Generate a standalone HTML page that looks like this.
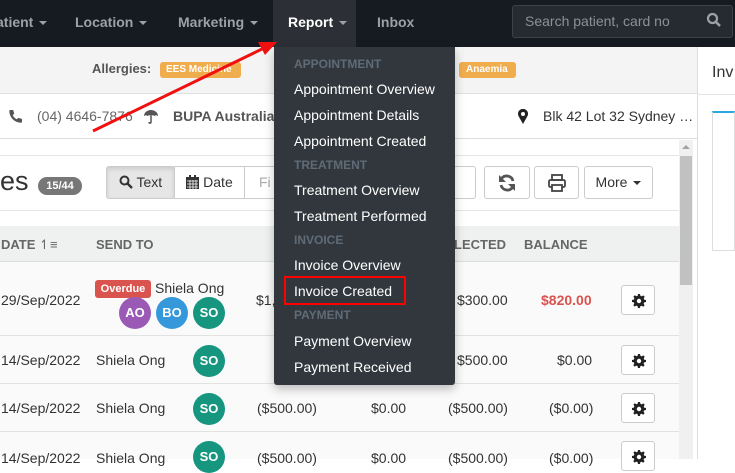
<!DOCTYPE html>
<html><head><style>
*{box-sizing:border-box;margin:0;padding:0}
body{width:735px;height:459px;overflow:hidden;background:#fff;font-family:"Liberation Sans",sans-serif;position:relative;font-size:14px;color:#333}
.a{position:absolute}
.nav{left:0;top:0;width:735px;height:47px;background:#161b21}
.ni{top:14px;color:#9da1a6;font-weight:bold;font-size:14px}
.car{display:inline-block;border-left:4px solid transparent;border-right:4px solid transparent;border-top:4px solid currentColor;vertical-align:middle;margin-left:6px}
.dd{left:274px;top:47px;width:181px;height:338px;background:#32373d;border-radius:0 0 3px 3px;box-shadow:0 4px 10px rgba(0,0,0,.25)}
.dh{left:20px;color:#5f6b76;font-size:12px;font-weight:bold}
.di{left:20px;color:#fff;font-size:14px}
.btn{top:166px;height:33px;border:1px solid #ccc;background:#fff;border-radius:3px;font-size:14px;line-height:31px;text-align:center;color:#333}
.btn svg{vertical-align:-2px}
.th{top:237px;font-weight:bold;color:#666;font-size:13px}
.av{width:32px;height:32px;border-radius:50%;color:#fff;font-weight:bold;font-size:13px;text-align:center;line-height:32px}
.gear{width:34px;height:30px;border:1px solid #ccc;border-radius:3px;background:#fff;left:621px}
.gear svg{position:absolute;left:10px;top:8px}
</style></head><body>
<svg width="0" height="0" style="position:absolute"><defs>
<g id="cog"><path d="M6 0h2l.4 1.8 1.3.6 1.6-1 1.4 1.4-1 1.6.6 1.3L14 6v2l-1.8.4-.6 1.3 1 1.6-1.4 1.4-1.6-1-1.3.6L8 14H6l-.4-1.8-1.3-.6-1.6 1-1.4-1.4 1-1.6-.6-1.3L0 8V6l1.8-.4.6-1.3-1-1.6 1.4-1.4 1.6 1 1.3-.6z" fill="#222"/><circle cx="7" cy="7" r="2.2" fill="#fff"/></g>
</defs></svg>
<div class="a nav"></div>
<div class="a ni" style="left:-4px">atient<span class="car"></span></div>
<div class="a ni" style="left:75px">Location<span class="car"></span></div>
<div class="a ni" style="left:178px">Marketing<span class="car"></span></div>
<div class="a" style="left:273px;top:0;width:83px;height:47px;background:#2c3036"></div>
<div class="a ni" style="left:288px;color:#fff">Report<span class="car" style="color:#9da1a6"></span></div>
<div class="a ni" style="left:377px">Inbox</div>
<div class="a" style="left:512px;top:5px;width:221px;height:33px;background:#262b31;border:1px solid #3d4248;border-radius:3px"></div>
<div class="a" style="left:525px;top:13px;color:#8d9197;font-size:14px">Search patient, card no</div>
<svg class="a" style="left:706px;top:12px" width="16" height="16"><circle cx="6.5" cy="6.5" r="4.5" stroke="#9da1a6" stroke-width="2.2" fill="none"/><line x1="10" y1="10" x2="14" y2="14" stroke="#9da1a6" stroke-width="2.6"/></svg>

<div class="a" style="left:0;top:47px;width:697px;height:47px;background:#f4f4f4;border-bottom:1px solid #e0e0e0"></div>
<div class="a" style="left:92px;top:61px;font-weight:bold;color:#555;font-size:13px">Allergies:</div>
<div class="a" style="left:160px;top:62px;width:81px;height:16px;background:#f0ad4e;border-radius:3px;color:#fff;font-size:10px;font-weight:bold;line-height:16px;padding-left:6px">EES Medicine</div>
<div class="a" style="left:459px;top:62px;width:57px;height:16px;background:#f0ad4e;border-radius:3px;color:#fff;font-size:10px;font-weight:bold;line-height:16px;padding-left:7px">Anaemia</div>
<div class="a" style="left:0;top:95px;width:697px;height:44px;background:#fff;border-bottom:1px solid #ddd"></div>
<svg class="a" style="left:9px;top:109px" width="14" height="14"><path d="M13 10.5v2.2c0 .5-.5 1-1 1C5.5 13.5.5 8.5.3 2 .3 1.4.8 1 1.3 1h2.3c.4 0 .7.3.8.6l.7 2.6c.1.3 0 .6-.3.9L3.7 6.3c.9 1.8 2.3 3.2 4 4l1.2-1.1c.2-.2.6-.3.9-.2l2.6.7c.4.1.6.4.6.8z" fill="#555"/></svg>
<div class="a" style="left:37px;top:108px;color:#666">(04) 4646-7876</div>
<svg class="a" style="left:143px;top:109px" width="16" height="16"><path d="M1 7 A7 6 0 0 1 15 7 Q13 5.5 11.5 7 Q10 5.5 8 7 Q6 5.5 4.5 7 Q3 5.5 1 7z" fill="#555"/><path d="M8 7v6c0 1.5-2 1.5-2 0" stroke="#555" stroke-width="1.5" fill="none"/></svg>
<div class="a" style="left:173px;top:108px;color:#555;font-weight:bold">BUPA Australia</div>
<svg class="a" style="left:517px;top:109px" width="12" height="16"><path d="M6 15 L1.5 7 A5 5 0 1 1 10.5 7 Z" fill="#222"/><circle cx="6" cy="5" r="2" fill="#fff"/></svg>
<div class="a" style="left:543px;top:108px;color:#333">Blk 42 Lot 32 Sydney …</div>
<div class="a" style="left:697px;top:47px;width:38px;height:412px;border-left:1px solid #ddd;background:#fff"></div>
<div class="a" style="left:697px;top:94px;width:38px;border-top:1px solid #e5e5e5"></div>
<div class="a" style="left:712px;top:64px;font-size:16px;color:#333">Inv</div>
<div class="a" style="left:712px;top:111px;width:23px;height:140px;border:1px solid #ddd;border-top:2px solid #29a9e0"></div>

<div class="a" style="left:0;top:155px;width:679px;border-top:1px solid #e5e5e5"></div>
<div class="a" style="left:0;top:210px;width:679px;border-top:1px solid #e5e5e5"></div>
<div class="a" style="left:0;top:166px;font-size:27px;color:#333">es</div>
<div class="a" style="left:38px;top:177px;width:44px;height:18px;border-radius:9px;background:#777;color:#fff;font-size:11px;font-weight:bold;line-height:18px;text-align:center">15/44</div>
<div class="a btn" style="left:106px;width:69px;background:#e6e6e6;box-shadow:inset 0 2px 4px rgba(0,0,0,.12)"><svg width="14" height="14"><circle cx="5.5" cy="5.5" r="4" stroke="#333" stroke-width="2" fill="none"/><line x1="8.5" y1="8.5" x2="13" y2="13" stroke="#333" stroke-width="2.4"/></svg> Text</div>
<div class="a btn" style="left:174px;width:71px;border-radius:0"><svg width="13" height="14"><rect x="0" y="2" width="13" height="12" fill="#333"/><rect x="3" y="0" width="2" height="3" fill="#333"/><rect x="8" y="0" width="2" height="3" fill="#333"/><path d="M1 6h11M1 9h11M1 12h11M4 5v9M7 5v9M10 5v9" stroke="#fff" stroke-width=".8"/></svg> Date</div>
<div class="a btn" style="left:244px;width:232px;border-radius:0 3px 3px 0;text-align:left;padding-left:14px;color:#aaa">Fi</div>
<div class="a btn" style="left:484px;width:46px"><svg width="20" height="20" style="margin-top:6px"><path d="M16 8A6.5 6.5 0 0 0 4.5 5.5" stroke="#555" stroke-width="2.8" fill="none"/><path d="M4 12A6.5 6.5 0 0 0 15.5 14.5" stroke="#555" stroke-width="2.8" fill="none"/><path d="M2 2v7h7z" fill="#555"/><path d="M18 18v-7h-7z" fill="#555"/></svg></div>
<div class="a btn" style="left:534px;width:45px"><svg width="18" height="18" style="margin-top:7px"><rect x="4" y="1" width="10" height="5" stroke="#444" stroke-width="1.8" fill="none"/><rect x="1" y="6" width="16" height="7" rx="1.5" stroke="#444" stroke-width="1.8" fill="none"/><rect x="4" y="11" width="10" height="6" stroke="#444" stroke-width="1.8" fill="#fff"/></svg></div>
<div class="a btn" style="left:584px;width:69px">More<span class="car"></span></div>

<div class="a" style="left:0;top:226px;width:679px;height:36px;background:#eff1f1;border-bottom:1px solid #ddd"></div>
<div class="a th" style="left:1px">DATE <span style="font-weight:normal">↿≡</span></div>
<div class="a th" style="left:96px">SEND TO</div>
<div class="a th" style="left:454px">LECTED</div>
<div class="a th" style="left:524px">BALANCE</div>
<div class="a" style="left:0;top:262px;width:679px;height:197px;background:#fafafa"></div>
<div class="a" style="left:0;top:335px;width:679px;border-top:1px solid #e2e2e2"></div>
<div class="a" style="left:0;top:383px;width:679px;border-top:1px solid #e2e2e2"></div>
<div class="a" style="left:0;top:431px;width:679px;border-top:1px solid #e2e2e2"></div>

<div class="a" style="left:1px;top:292px">29/Sep/2022</div>
<div class="a" style="left:95px;top:280px;width:56px;height:18px;background:#d9534f;border-radius:3px;color:#fff;font-size:11px;font-weight:bold;line-height:18px;text-align:center">Overdue</div>
<div class="a" style="left:155px;top:280px">Shiela Ong</div>
<div class="a av" style="left:119px;top:297px;background:#9b59b6">AO</div>
<div class="a av" style="left:156px;top:297px;background:#3498db">BO</div>
<div class="a av" style="left:193px;top:297px;background:#16967f">SO</div>
<div class="a" style="left:256px;top:292px">$1,</div>
<div class="a" style="left:457px;top:292px">$300.00</div>
<div class="a" style="left:541px;top:292px;color:#d9534f;font-weight:bold">$820.00</div>
<div class="a gear" style="top:285px"><svg width="14" height="14"><use href="#cog"/></svg></div>

<div class="a" style="left:1px;top:352px">14/Sep/2022</div>
<div class="a" style="left:96px;top:352px">Shiela Ong</div>
<div class="a av" style="left:193px;top:345px;background:#16967f">SO</div>
<div class="a" style="left:457px;top:352px">$500.00</div>
<div class="a" style="left:557px;top:352px">$0.00</div>
<div class="a gear" style="top:345px"><svg width="14" height="14"><use href="#cog"/></svg></div>

<div class="a" style="left:1px;top:400px">14/Sep/2022</div>
<div class="a" style="left:96px;top:400px">Shiela Ong</div>
<div class="a av" style="left:193px;top:393px;background:#16967f">SO</div>
<div class="a" style="left:257px;top:400px">($500.00)</div>
<div class="a" style="left:371px;top:400px">$0.00</div>
<div class="a" style="left:448px;top:400px">($500.00)</div>
<div class="a" style="left:549px;top:400px">($0.00)</div>
<div class="a gear" style="top:393px"><svg width="14" height="14"><use href="#cog"/></svg></div>

<div class="a" style="left:1px;top:450px">14/Sep/2022</div>
<div class="a" style="left:96px;top:450px">Shiela Ong</div>
<div class="a av" style="left:193px;top:441px;background:#16967f">SO</div>
<div class="a" style="left:257px;top:450px">($500.00)</div>
<div class="a" style="left:371px;top:450px">$0.00</div>
<div class="a" style="left:448px;top:450px">($500.00)</div>
<div class="a" style="left:549px;top:450px">($0.00)</div>
<div class="a gear" style="top:441px"><svg width="14" height="14"><use href="#cog"/></svg></div>

<div class="a" style="left:679px;top:140px;width:14px;height:319px;background:#f0f0f0"></div>
<div class="a" style="left:680px;top:156px;width:12px;height:129px;background:#c1c1c1"></div>
<div class="a" style="left:682px;top:145px;border-left:4px solid transparent;border-right:4px solid transparent;border-bottom:4px solid #a3a3a3"></div>

<div class="a dd">
<div class="a dh" style="top:10px">APPOINTMENT</div>
<div class="a di" style="top:34px">Appointment Overview</div>
<div class="a di" style="top:60px">Appointment Details</div>
<div class="a di" style="top:86px">Appointment Created</div>
<div class="a dh" style="top:111px">TREATMENT</div>
<div class="a di" style="top:135px">Treatment Overview</div>
<div class="a di" style="top:161px">Treatment Performed</div>
<div class="a dh" style="top:186px">INVOICE</div>
<div class="a di" style="top:210px">Invoice Overview</div>
<div class="a di" style="top:236px">Invoice Created</div>
<div class="a dh" style="top:261px">PAYMENT</div>
<div class="a di" style="top:286px">Payment Overview</div>
<div class="a di" style="top:312px">Payment Received</div>
</div>
<div class="a" style="left:284px;top:276px;width:122px;height:29px;border:2px solid #ff0000"></div>
<svg class="a" style="left:0;top:0" width="735" height="459"><line x1="93" y1="131" x2="262" y2="49" stroke="#f01010" stroke-width="3"/><polygon points="277,42 258,42 265,55" fill="#f01010"/></svg>
</body></html>
